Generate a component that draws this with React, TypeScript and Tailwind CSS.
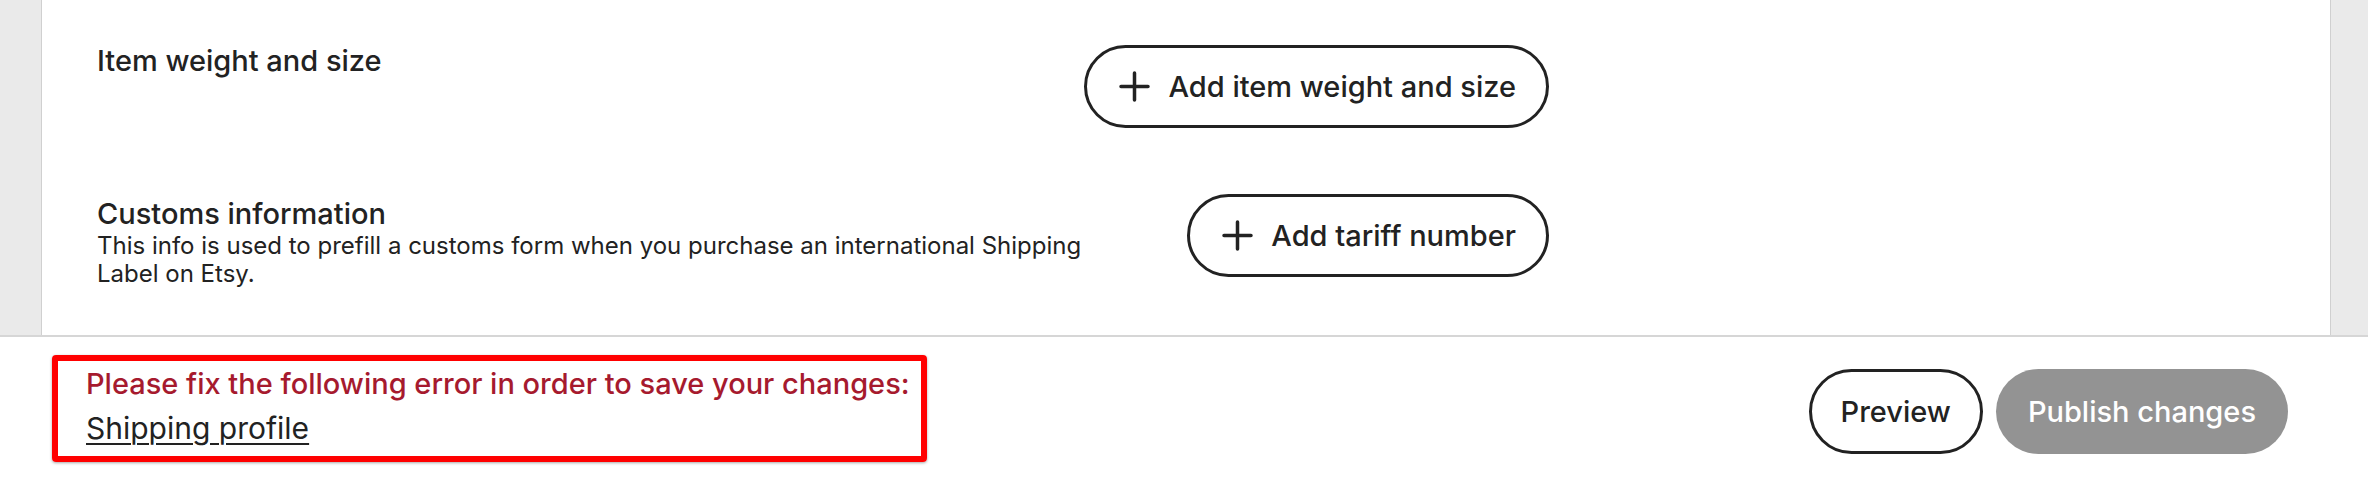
import React from "react";

function Plus() {
  return (
    <svg width="31" height="31" viewBox="0 0 31 31" fill="none" stroke="#222222" strokeWidth="3.5" strokeLinecap="round">
      <path d="M15.5 2v27M2 15.5h27" />
    </svg>
  );
}

function AddButton({ label }: { label: string }) {
  return (
    <button className="h-[83px] rounded-full border-[3px] border-[#222222] bg-white pl-[32px] pr-[30px] flex items-center gap-[18px] text-[29px] font-medium text-[#222222] leading-none">
      <Plus />
      <span>{label}</span>
    </button>
  );
}

export default function App() {
  return (
    <div className="w-[2368px] h-[480px] bg-white flex flex-col font-['Inter',sans-serif] text-[#222222]">
      <div className="flex h-[337px] border-b-2 border-[#d6d6d6]">
        <div className="w-[42px] bg-[#eaeaea] border-r border-[#d0d0d0]" />
        <div className="flex-1 bg-white pl-[55px] pt-[43px]">
          <div className="w-[1452px] flex flex-col">
            <div className="flex justify-between items-start">
              <h2 className="text-[29px] font-medium leading-[36px]">Item weight and size</h2>
              <div className="mt-[2px]">
                <AddButton label="Add item weight and size" />
              </div>
            </div>
            <div className="flex justify-between items-start mt-[66px]">
              <div className="w-[1040px] pt-[2px]">
                <h2 className="text-[29px] font-medium leading-[36px]">Customs information</h2>
                <p className="text-[24px] leading-[28px]">
                  This info is used to prefill a customs form when you purchase an international Shipping Label on Etsy.
                </p>
              </div>
              <AddButton label="Add tariff number" />
            </div>
          </div>
        </div>
        <div className="w-[38px] bg-[#eaeaea] border-l border-[#d0d0d0]" />
      </div>
      <div className="flex-1 flex items-center justify-between pl-[52px] pr-[80px]">
        <div className="w-[875px] h-[107px] border-[6px] border-[#ff0000] rounded-[4px] shadow-[0_1px_3px_rgba(0,0,0,0.35)] pl-[28px] pt-[1px]">
          <div className="text-[29px] leading-[44px] font-medium text-[#a61a2e]">
            Please fix the following error in order to save your changes:
          </div>
          <div className="text-[30px] leading-[44px]">
            <a className="underline decoration-[2px] underline-offset-[4px] text-[#222222]">Shipping profile</a>
          </div>
        </div>
        <div className="flex items-center gap-[13px] mt-[6px]">
          <button className="h-[85px] px-[29px] rounded-full border-[3px] border-[#222222] bg-white text-[29px] font-medium text-[#222222]">
            Preview
          </button>
          <button className="h-[85px] px-[32px] rounded-full bg-[#939393] text-[29px] font-medium text-white">
            Publish changes
          </button>
        </div>
      </div>
    </div>
  );
}
